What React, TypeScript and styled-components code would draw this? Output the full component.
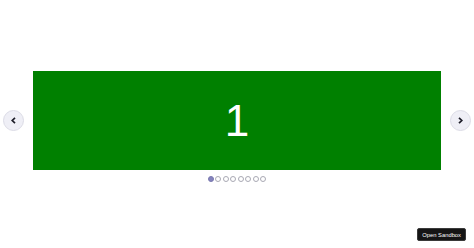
import React, { ReactElement, useState } from 'react';
import styled, { createGlobalStyle, css } from 'styled-components';

const GlobalStyle = createGlobalStyle`
    html, body {
        margin: 0;
        padding: 0;
        background: #ffffff;
        font-family: 'Liberation Sans', Arial, sans-serif;
    }
`;

const Page = styled.div`
    height: 248px;
    padding-top: 71px;
    box-sizing: border-box;
`;

const Row = styled.div`
    display: flex;
    align-items: center;
    padding: 0 3px;
`;

const Arrow = styled.button`
    flex: none;
    width: 21px;
    height: 21px;
    padding: 0;
    border-radius: 50%;
    border: 1px solid #dcdce6;
    background: #efeff6;
    color: #1d1d28;
    display: flex;
    align-items: center;
    justify-content: center;
    cursor: pointer;
`;

const Slide = styled.div`
    flex: 1;
    height: 99px;
    margin: 0 9px;
    background: #008000;
    color: #ffffff;
    display: flex;
    align-items: center;
    justify-content: center;
    font-size: 44px;
`;

const Dots = styled.div`
    display: flex;
    justify-content: center;
    gap: 1.5px;
    margin-top: 6px;
`;

const Dot = styled.span<{ active: boolean }>`
    width: 6px;
    height: 6px;
    box-sizing: border-box;
    border-radius: 50%;
    border: 1px solid #a9a9b4;
    background: #ffffff;
    ${(props) =>
        props.active &&
        css`
            background: #8483bd;
            border-color: #7a79b0;
        `}
`;

const SandboxButton = styled.a`
    position: fixed;
    right: 8px;
    bottom: 7px;
    height: 13px;
    padding: 0 4px;
    box-sizing: border-box;
    display: flex;
    align-items: center;
    background: #151515;
    border: 1px solid #3a3a3a;
    border-radius: 2px;
    color: #ffffff;
    font-size: 5.8px;
    text-decoration: none;
`;

const ChevronLeft = () => (
    <svg width="5" height="7" viewBox="0 0 5 7">
        <path d="M4 0.8 L1.2 3.5 L4 6.2" fill="none" stroke="currentColor" strokeWidth="1.7" />
    </svg>
);

const ChevronRight = () => (
    <svg width="5" height="7" viewBox="0 0 5 7">
        <path d="M1 0.8 L3.8 3.5 L1 6.2" fill="none" stroke="currentColor" strokeWidth="1.7" />
    </svg>
);

const slides = [1, 2, 3, 4, 5, 6, 7, 8];

const App = (): ReactElement => {
    const [current, setCurrent] = useState(0);
    const prev = () => setCurrent((current + slides.length - 1) % slides.length);
    const next = () => setCurrent((current + 1) % slides.length);

    return (
        <>
            <GlobalStyle />
            <Page>
                <Row>
                    <Arrow onClick={prev}>
                        <ChevronLeft />
                    </Arrow>
                    <Slide>{slides[current]}</Slide>
                    <Arrow onClick={next}>
                        <ChevronRight />
                    </Arrow>
                </Row>
                <Dots>
                    {slides.map((s, i) => (
                        <Dot key={s} active={i === current} onClick={() => setCurrent(i)} />
                    ))}
                </Dots>
            </Page>
            <SandboxButton href="#">Open Sandbox</SandboxButton>
        </>
    );
};

export default App;
